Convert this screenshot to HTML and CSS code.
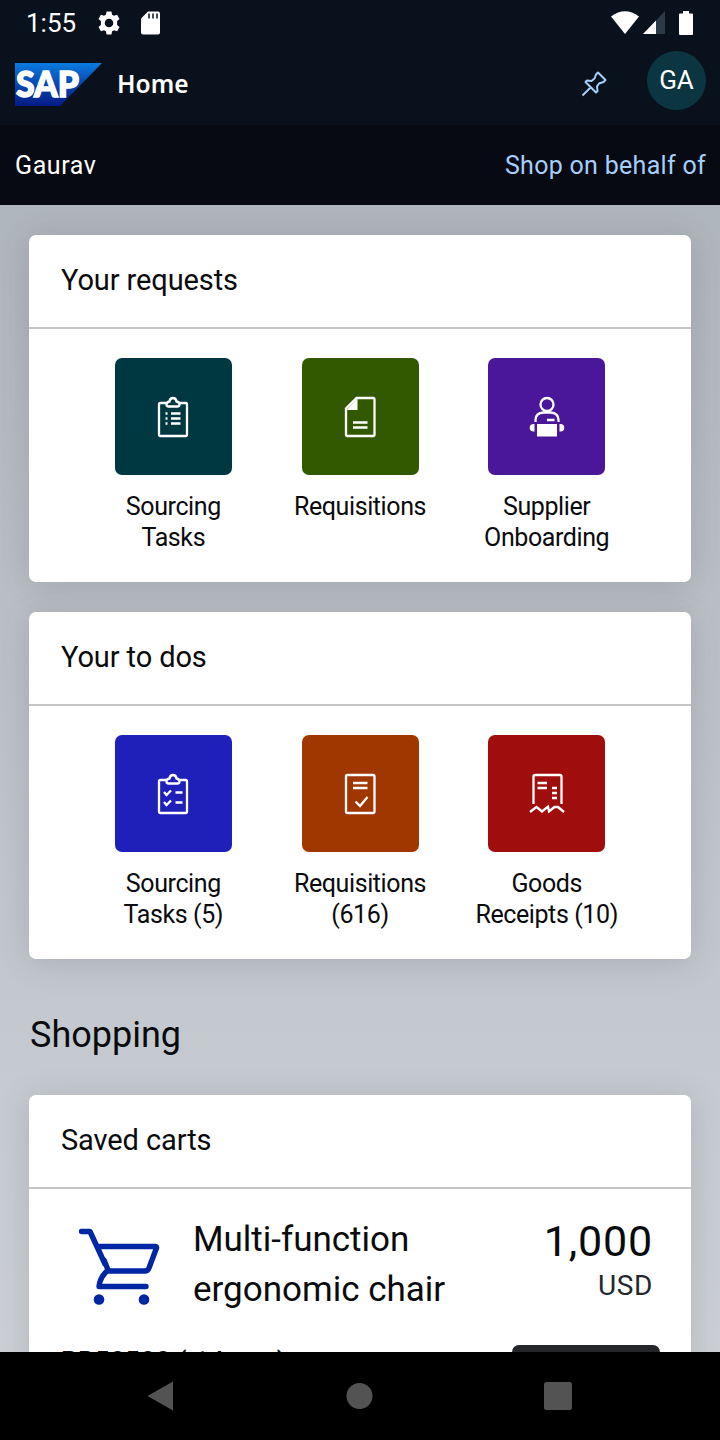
FILE: index.html
```html
<!DOCTYPE html>
<html lang="en">
<head>
    <meta charset="UTF-8">
    <meta name="viewport" content="width=device-width, initial-scale=1.0">
    <title>Home</title>
    <link rel="stylesheet" href="styles.css">
</head>
<body>
    <div class="status-bar">
        <span class="time">1:55</span>
        <svg class="gear" width="24" height="24" viewBox="0 0 24 24"><path fill="#fff" fill-rule="evenodd" d="M9.6 0.5h4.8l.7 3.2 1.9 1.1 3.1-1 2.4 4.1-2.4 2.2v3.8l2.4 2.2-2.4 4.1-3.1-1-1.9 1.1-.7 3.2H9.6l-.7-3.2L7 19.200l-3.100 1-2.400-4.100 2.400-2.200v-3.800L1.500 7.900l2.400-4.100 3.100 1 1.900-1.100zM12 7.700a4.300 4.300 0 1 0 0 8.600a4.300 4.300 0 1 0 0-8.600z"/></svg>
        <svg class="sd" width="19" height="24" viewBox="0 0 19 24"><path fill="#fff" d="M7 .5h10a2 2 0 0 1 2 2v19a2 2 0 0 1-2 2H2a2 2 0 0 1-2-2v-14z"/><path stroke="#08111c" stroke-width="1.500" d="M8 2.500v5M12 2.500v5M16 2.500v5"/></svg>
        <div class="signals">
            <svg width="28" height="23" viewBox="0 0 28 23"><path fill="#fff" d="M0 5.500Q14-5 28 5.500L14 23z"/></svg>
            <svg class="cell" width="22" height="23" viewBox="0 0 22 23"><path fill="#2c3947" d="M22 0v23H0z"/><path fill="#fff" d="M13 9.400V23H0z"/></svg>
            <svg class="battery" width="14" height="24" viewBox="0 0 14 24"><path fill="#fff" d="M4 0h6v2.500h3q1 0 1 1V23q0 1-1 1H1q-1 0-1-1V3.500q0-1 1-1h3z"/></svg>
        </div>
    </div>
    <header>
        <svg class="logo" width="88" height="44" viewBox="0 0 88 44">
            <defs>
                <linearGradient id="sap" x2="0" y2="1">
                    <stop offset="0" stop-color="#0a7be0"/>
                    <stop offset=".5" stop-color="#0647ae"/>
                    <stop offset="1" stop-color="#051a86"/>
                </linearGradient>
            </defs>
            <path fill="url(#sap)" d="M0 1h87L45 44H0z"/>
            <text class="logo-text" x="1" y="34.500" textLength="63" lengthAdjust="spacingAndGlyphs">SAP</text>
        </svg>
        <h1>Home</h1>
        <svg class="pin" width="26" height="26" viewBox="0 0 26 26"><path d="M1.500 24.500L10 16M17 1.500L24.500 9l-2 2-4.500 1.500-2 3 .5 4.500-1.500 1.500L4.500 11 6 9.500l4.500.5 3-2.500 1.500-4z"/></svg>
        <div class="avatar">GA</div>
    </header>
    <div class="user-bar">
        <span class="user">Gaurav</span>
        <a class="behalf">Shop on behalf of</a>
    </div>
    <main>
        <section class="card">
            <h2>Your requests</h2>
            <div class="tiles">
                <div class="tile">
                    <div class="icon teal">
                        <svg width="36" height="42" viewBox="0 0 36 42"><path d="M11 7H5.500Q4 7 4 8.500v30Q4 40 5.500 40h25q1.500 0 1.500-1.500v-30Q32 7 30.500 7H25"/><path d="M13.500 10.500q-2 0-2-2 0-2.500 3-3 .5-3.500 3.500-3.500t3.500 3.500q3 .5 3 3 0 2-2 2z"/><path d="M16 17.500h9.500M16 22.500h9.500M16 27.500h9.500M10.500 17.500h2M10.500 22.500h2M10.500 27.500h2"/></svg>
                    </div>
                    <span>Sourcing Tasks</span>
                </div>
                <div class="tile">
                    <div class="icon green">
                        <svg width="36" height="42" viewBox="0 0 36 42"><path d="M14.500 2H31q1.500 0 1.500 1.500v35Q32.500 40 31 40H5.500Q4 40 4 38.500v-26z"/><path class="solid" d="M15.500 2v12H4.500z"/><path d="M11 26.500h14.500M11 31.500h14.500"/></svg>
                    </div>
                    <span>Requisitions</span>
                </div>
                <div class="tile">
                    <div class="icon purple">
                        <svg width="36" height="42" viewBox="0 0 36 42"><circle cx="18" cy="8.500" r="6.500"/><path d="M6.500 26v-2q0-7 8-7.500h7q8 .5 8 7.500v2M18 24h7.500"/><path class="solid" d="M8 28h20v12.500H8zM5.500 28v7.500h-1a3.700 3.700 0 0 1 0-7.500zM30.500 28v7.500h1a3.700 3.700 0 0 0 0-7.500z"/></svg>
                    </div>
                    <span>Supplier Onboarding</span>
                </div>
            </div>
        </section>
        <section class="card">
            <h2>Your to dos</h2>
            <div class="tiles">
                <div class="tile">
                    <div class="icon blue">
                        <svg width="36" height="42" viewBox="0 0 36 42"><path d="M11 7H5.500Q4 7 4 8.500v30Q4 40 5.500 40h25q1.500 0 1.500-1.500v-30Q32 7 30.500 7H25"/><path d="M13.500 10.500q-2 0-2-2 0-2.500 3-3 .5-3.500 3.500-3.500t3.500 3.500q3 .5 3 3 0 2-2 2z"/><path d="M9 19l2.500 3 4.500-4.500M9 29l2.500 3 4.500-4.500M20.500 19.500h7M20.500 29.500h7"/></svg>
                    </div>
                    <span>Sourcing Tasks&nbsp;(5)</span>
                </div>
                <div class="tile">
                    <div class="icon orange">
                        <svg width="36" height="42" viewBox="0 0 36 42"><rect x="4" y="2" width="28.500" height="38" rx="1.500"/><path d="M11 10h14.500M11 15h14.500M13.500 28.500l4.500 4.500 7.500-9"/></svg>
                    </div>
                    <span>Requisitions (616)</span>
                </div>
                <div class="tile">
                    <div class="icon red">
                        <svg width="36" height="42" viewBox="0 0 36 42"><path d="M4.500 31V3.500Q4.500 2 6 2h25q1.500 0 1.500 1.500V31M8.500 10H18M8.500 15H18M23 15h5M23 20h5M23 25h5M1 39l6.500-5 5.500 4.500 6-5 1 5 5.500-4.500L29 34l6 5"/></svg>
                    </div>
                    <span>Goods Receipts&nbsp;(10)</span>
                </div>
            </div>
        </section>
        <h3>Shopping</h3>
        <section class="card saved">
            <h2>Saved carts</h2>
            <div class="product">
                <svg class="cart" width="82" height="78" viewBox="0 0 82 78"><path d="M2.500 3.500H11L26 36M20.500 18.500h56q1.500 0 1 1.500l-7.500 20q-1 3-4 3H29.500L25 32M29 42q-8 7-9 16.500h47"/><circle cx="20" cy="71.500" r="5.300"/><circle cx="65" cy="71.500" r="5.300"/></svg>
                <div class="name">Multi-function ergonomic chair</div>
                <div class="price">
                    <div class="amount">1,000</div>
                    <div class="currency">USD</div>
                </div>
            </div>
            <div class="cart-footer">
                <span>PR50500 ( 1 Item )</span>
                <button type="button">Composing</button>
            </div>
        </section>
    </main>
    <nav>
        <svg width="26" height="30" viewBox="0 0 26 30"><path d="M26 .5v29L.5 15z"/></svg>
        <svg width="28" height="28" viewBox="0 0 28 28"><circle cx="14.500" cy="14" r="13"/></svg>
        <svg width="28" height="28" viewBox="0 0 28 28"><rect width="28" height="28" rx="2.500"/></svg>
    </nav>
</body>
</html>
```
FILE: styles.css
```css
* {
    box-sizing: border-box;
}

body {
    display: flex;
    flex-direction: column;
    width: 720px;
    height: 1440px;
    margin: 0;
    overflow: hidden;
    background-color: #08111c;
    color: #0a0b0d;
    font-family: Roboto, sans-serif;
}

svg {
    display: block;
    flex-shrink: 0;
}

h1, h2, h3 {
    margin: 0;
    font-weight: 400;
}

.status-bar {
    display: flex;
    align-items: center;
    height: 46px;
    flex-shrink: 0;
    padding: 0 27px 1px 26px;
    color: #fff;
}

.time {
    width: 71px;
    font-size: 26px;
}

.sd {
    margin-left: 20px;
}

.signals {
    display: flex;
    align-items: center;
    margin-left: auto;
}

.cell {
    margin-left: 4px;
}

.battery {
    margin-left: 14px;
}

header {
    display: flex;
    align-items: center;
    height: 79px;
    flex-shrink: 0;
    padding: 0 14px 3px 15px;
}

.logo-text {
    font: 900 36px Lato, sans-serif;
    fill: #fff;
    stroke: #fff;
    stroke-width: 1.5;
}

h1 {
    margin: -1px 0 0 14px;
    color: #fff;
    font: 600 24.500px "Noto Sans", sans-serif;
}

.pin {
    margin: 0 1px 0 auto;
    fill: none;
    stroke: #a6cffb;
    stroke-width: 2;
    stroke-linejoin: round;
}

.avatar {
    width: 59px;
    height: 59px;
    margin: -7px 0 0 39px;
    border-radius: 50%;
    background-color: #0b3541;
    color: #fff;
    font-size: 26px;
    line-height: 59px;
    text-align: center;
}

.user-bar {
    display: flex;
    align-items: center;
    justify-content: space-between;
    height: 80px;
    flex-shrink: 0;
    padding: 0 14px 0 15px;
    background-color: #070a12;
    color: #fff;
    font-size: 25px;
}

.user {
    letter-spacing: 0.6px;
}

.behalf {
    color: #a6cffb;
    letter-spacing: 0.3px;
}

main {
    flex: 1;
    min-height: 0;
    overflow: hidden;
    padding: 30px 29px 0;
    background: linear-gradient(#aeb5bb, #c5cad1 75%, #ccd0d5);
}

.card {
    height: 347px;
    margin-bottom: 30px;
    border-radius: 7px;
    background-color: #fff;
    box-shadow: 0 4px 32px rgba(80, 75, 70, 0.2);
}

h2 {
    height: 94px;
    padding-left: 32px;
    border-bottom: 2px solid #c4c5c7;
    font-size: 29px;
    letter-spacing: -0.1px;
    line-height: 90px;
}

.tiles {
    display: flex;
    width: 560px;
    margin: 0 auto;
    padding-top: 29px;
}

.tile {
    display: flex;
    flex: 1;
    flex-direction: column;
    align-items: center;
    font-size: 25px;
    letter-spacing: -0.4px;
    line-height: 30.500px;
    text-align: center;
}

.tile span {
    width: 155px;
}

.icon {
    display: flex;
    align-items: center;
    justify-content: center;
    width: 117px;
    height: 117px;
    margin-bottom: 17px;
    border-radius: 7px;
}

.icon svg {
    overflow: visible;
    fill: none;
    stroke: #fff;
    stroke-width: 2.300;
}

.icon .solid {
    fill: #fff;
    stroke: none;
}

.teal {
    background-color: #003842;
}

.green {
    background-color: #335900;
}

.purple {
    background-color: #4a179b;
}

.blue {
    background-color: #1f20ba;
}

.orange {
    background-color: #a03600;
}

.red {
    background-color: #9f0d0d;
}

h3 {
    height: 106px;
    padding-left: 1px;
    font-size: 36px;
    line-height: 92px;
}

.product {
    display: flex;
    padding: 26px 38px 0 50px;
}

.cart {
    margin-top: 13px;
    fill: none;
    stroke: #0027a3;
    stroke-width: 5.400;
    stroke-linejoin: round;
    stroke-linecap: round;
}

.cart circle {
    fill: #0027a3;
    stroke: none;
}

.name {
    width: 300px;
    margin-left: 32px;
    font-size: 35px;
    line-height: 50px;
}

.price {
    margin-left: auto;
    text-align: right;
}

.amount {
    font-size: 43px;
    letter-spacing: 0.8px;
    line-height: 52px;
}

.currency {
    color: #24282d;
    font-size: 28px;
    letter-spacing: 0.6px;
    line-height: 37px;
}

.cart-footer {
    display: flex;
    align-items: flex-start;
    justify-content: space-between;
    margin-top: 28px;
    padding: 0 31px 0 32px;
    font-size: 26px;
    font-weight: 500;
    letter-spacing: 0.4px;
    line-height: 36px;
}

button {
    width: 148px;
    height: 50px;
    margin-top: 2px;
    padding: 0 2px 17px 0;
    border: none;
    border-radius: 7px;
    background-color: #242629;
    color: #fff;
    font: 24px Roboto, sans-serif;
}

nav {
    display: flex;
    align-items: center;
    justify-content: space-between;
    height: 88px;
    flex-shrink: 0;
    padding: 0 148px 0 147px;
    background-color: #000;
}

nav svg {
    fill: #535353;
}
```
